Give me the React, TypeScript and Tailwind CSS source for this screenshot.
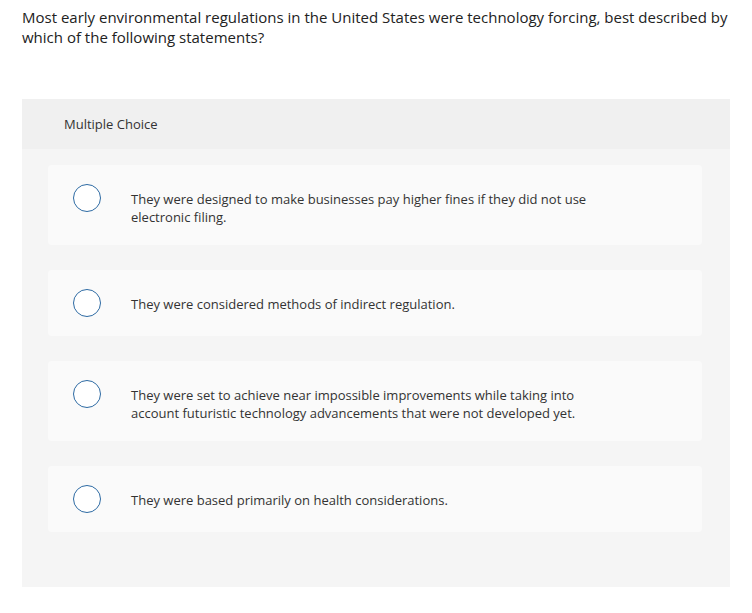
const OPTIONS = [
  'They were designed to make businesses pay higher fines if they did not use electronic filing.',
  'They were considered methods of indirect regulation.',
  'They were set to achieve near impossible improvements while taking into account futuristic technology advancements that were not developed yet.',
  'They were based primarily on health considerations.',
]

function Option({ text }: { text: string }) {
  return (
    <div className="flex items-start rounded bg-[#fafafa] py-[19px] pl-[25px] pr-[100px]">
      <span className="h-[28px] w-[28px] shrink-0 rounded-full border-[1.5px] border-[#2d6aa3] bg-white" />
      <p className="pl-[30px] pt-[6px] text-[13px] leading-[18px] text-[#333]">{text}</p>
    </div>
  )
}

export default function App() {
  return (
    <div className="min-h-[613px] bg-white px-[22px] pt-[7px]" style={{ fontFamily: '"Open Sans", "Liberation Sans", sans-serif' }}>
      <h1 className="text-[15px] leading-[20px] text-[#222]">
        Most early environmental regulations in the United States were technology forcing, best described by which of the following statements?
      </h1>

      <div className="mt-[52px] bg-[#f5f5f5]">
        <div className="flex h-[50px] items-center bg-[#f0f0f0] px-[42px] pt-[2px] text-[13px] text-[#333]">
          Multiple Choice
        </div>
        <div className="flex flex-col gap-[25px] pb-[55px] pl-[26px] pr-[28px] pt-[16px]">
          {OPTIONS.map((o) => (
            <Option key={o} text={o} />
          ))}
        </div>
      </div>
    </div>
  )
}
